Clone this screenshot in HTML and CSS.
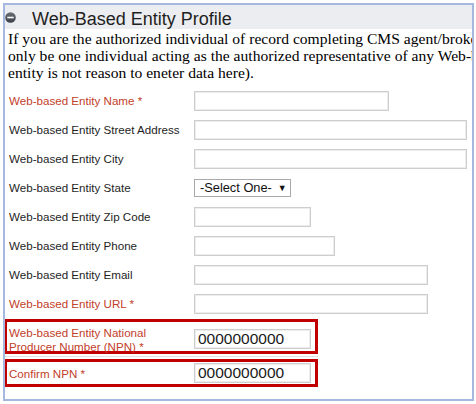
FILE: index.html
```html
<!DOCTYPE html>
<html>
<head>
<meta charset="utf-8">
<link rel="stylesheet" href="styles.css">
</head>
<body>
<div class="panel">
  <div class="panel-head">
    <svg class="toggle" width="11" height="11" viewBox="0 0 11 11">
      <defs>
        <linearGradient id="g" x1="0" y1="0" x2="0" y2="1">
          <stop offset="0" stop-color="#6a6f78"/>
          <stop offset="1" stop-color="#3c4049"/>
        </linearGradient>
      </defs>
      <circle cx="5.5" cy="5.5" r="5.3" fill="url(#g)"/>
      <rect x="2.3" y="4.7" width="6.4" height="1.6" fill="#fff"/>
    </svg>
    <h2 class="title">Web-Based Entity Profile</h2>
  </div>
  <div class="panel-body">
    <p class="intro">If you are the authorized individual of record completing CMS agent/broker registration, there can<br>only be one individual acting as the authorized representative of any Web-based Entity. Being the<br>entity is not reason to eneter data here).</p>
    <div class="form">
      <div class="row"><label class="lbl req">Web-based Entity Name *</label><input class="field w-name" type="text"></div>
      <div class="row"><label class="lbl">Web-based Entity Street Address</label><input class="field w-long" type="text"></div>
      <div class="row"><label class="lbl">Web-based Entity City</label><input class="field w-long" type="text"></div>
      <div class="row"><label class="lbl">Web-based Entity State</label><span class="select">-Select One-<span class="arrow">▼</span></span></div>
      <div class="row"><label class="lbl">Web-based Entity Zip Code</label><input class="field w-zip" type="text"></div>
      <div class="row"><label class="lbl">Web-based Entity Phone</label><input class="field w-phone" type="text"></div>
      <div class="row"><label class="lbl">Web-based Entity Email</label><input class="field w-mail" type="text"></div>
      <div class="row"><label class="lbl req">Web-based Entity URL *</label><input class="field w-mail" type="text"></div>
      <div class="row mark mark-tall"><label class="lbl req">Web-based Entity National<br>Producer Number (NPN) *</label><input class="field w-zip npn" type="text" value="0000000000"></div>
      <div class="sep"></div>
      <div class="row mark mark-short"><label class="lbl req">Confirm NPN *</label><input class="field w-zip npn" type="text" value="0000000000"></div>
    </div>
  </div>
</div>
</body>
</html>
```
FILE: styles.css
```css
* { box-sizing: border-box; }
html, body { margin: 0; padding: 0; background: #fff; }
body { width: 476px; height: 404px; overflow: hidden; }

.panel {
  margin: 3px 0 0 3px;
  width: 471px;
  border: 2px solid #a6b8e0;
  padding-bottom: 12px;
  overflow: hidden;
}
.panel-head {
  display: flex;
  align-items: center;
  height: 24px;
  background: #ebedf0;
}
.toggle { display: block; flex: none; margin-top: 1px; }
.title {
  margin: 0 0 0 16px;
  font: normal 18px/24px "Liberation Sans", Arial, sans-serif;
  color: #1f1f1f;
  position: relative;
  top: 2px;
}
.panel-body { overflow: hidden; }
.intro {
  margin: 1px 0 0 3px;
  font: 15.6px/17px "Liberation Serif", "Times New Roman", serif;
  color: #000;
  white-space: nowrap;
}
.form { margin-top: 5px; }
.row {
  display: flex;
  align-items: center;
  height: 29px;
  padding-left: 4px;
}
.lbl {
  flex: none;
  width: 185px;
  font: 11.6px/13px "Liberation Sans", Arial, sans-serif;
  color: #1e1e1e;
}
.lbl.req { color: #c2402a; }
.field {
  display: block;
  height: 20px;
  margin: 0;
  padding: 0 3px;
  border: 1px solid #cdcdcd;
  box-shadow: inset 0 0 0 1px #ededed;
  background: #fff;
  font: 15.5px "Liberation Sans", Arial, sans-serif;
  color: #1a1a1a;
  outline: none;
}
.w-name { width: 195px; }
.w-long { width: 273px; }
.w-zip { width: 117px; }
.w-phone { width: 141px; }
.w-mail { width: 234px; }
.select {
  display: flex;
  align-items: center;
  width: 97px;
  height: 18px;
  padding-left: 5px;
  border: 1px solid #a9a9a9;
  font: 12.8px "Liberation Sans", Arial, sans-serif;
  color: #111;
  background: #fff;
}
.arrow { font-size: 9px; margin-left: 6px; }

.mark {
  border: 3px solid #c00000;
  width: 314px;
  margin-left: -1px;
  padding-left: 2px;
}
.mark-tall {
  height: 35px;
  margin-top: 1px;
  align-items: flex-start;
}
.mark-tall .lbl { margin-top: 4px; line-height: 13.5px; }
.mark-tall .field { margin-top: 7px; }
.mark-short { height: 28px; }
.sep {
  height: 1px;
  margin: 2px 0;
  width: 313px;
  background: #e2e2e2;
}
```
